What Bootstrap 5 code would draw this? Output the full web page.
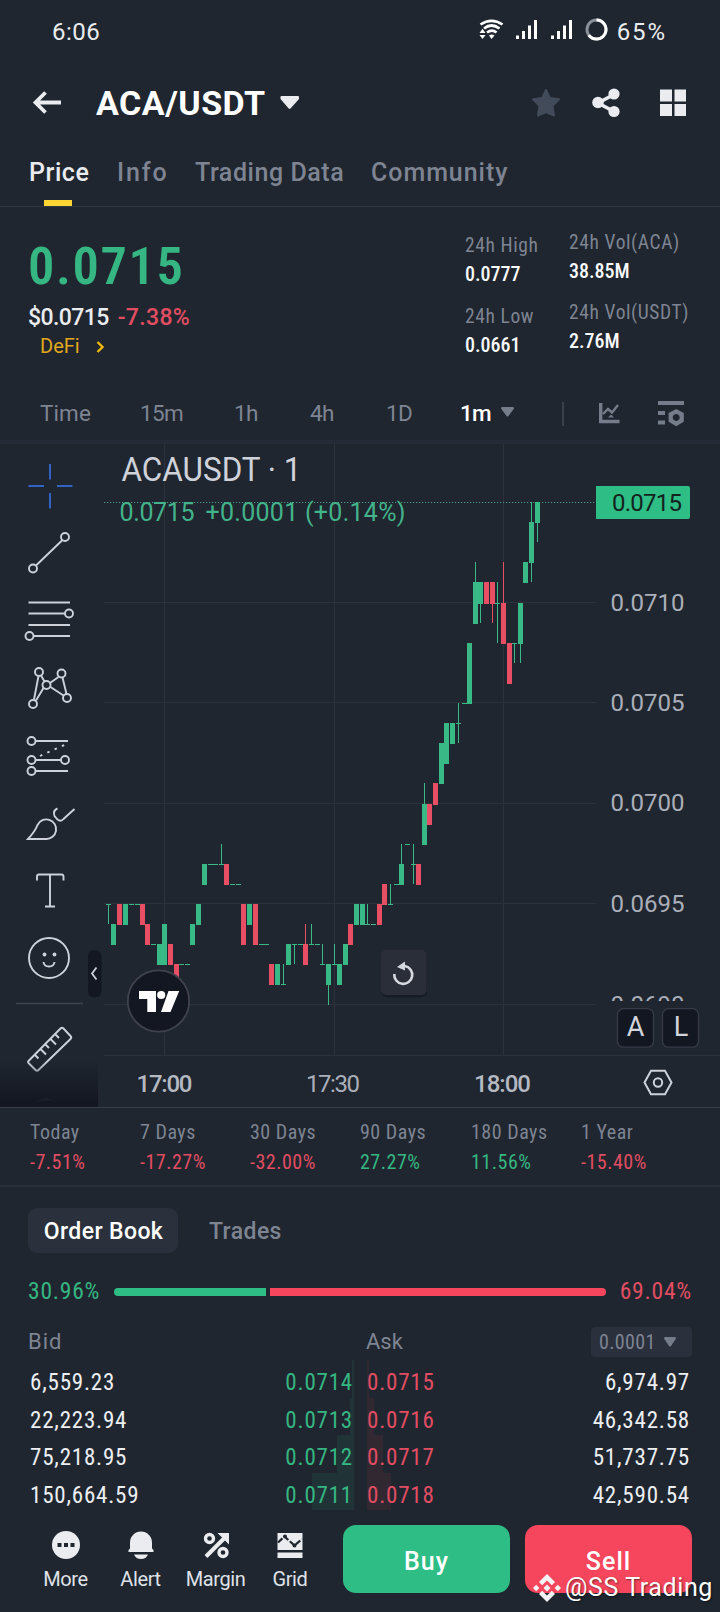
<!DOCTYPE html>
<html lang="en" data-bs-theme="dark">
<head>
<meta charset="utf-8">
<meta name="viewport" content="width=device-width, initial-scale=1">
<title>ACA/USDT</title>
<link href="https://cdn.jsdelivr.net/npm/bootstrap@5.3.0/dist/css/bootstrap.min.css" rel="stylesheet">
<style>
  :root { --bg:#1f262f; --line:#2d343f; --muted:#7e8492; --text:#eaecef; --up:#2ebd85; --down:#f6465d; --gold:#e2a81c; }
  body { width:720px; height:1612px; margin:0; background:var(--bg); color:var(--text); font-family:Roboto,"Noto Sans",sans-serif; overflow:hidden; }
  svg { display:block; flex:none; }
  .up { color:#35b682; } .down { color:#e14d62; } .dim { color:var(--muted); }
  .slim { font-stretch:75%; }
  .status { height:64px; padding:0 53px 0 52px; font-size:24px; letter-spacing:.5px; }
  .topbar { height:78px; padding-left:32px; padding-right:34px; }
  .pair { font-size:34px; font-weight:700; letter-spacing:.5px; line-height:1; color:#fff; margin-left:34px; margin-right:14px; }
  .tabs-row { display:grid; grid-template-columns:88px 78px 176px auto; height:65px; padding-left:29px; border-bottom:1px solid #303741; font-size:25px; font-weight:500; line-height:61px; letter-spacing:.55px; }
  .tabs-row .current { position:relative; color:var(--text); }
  .tabs-row .current::after { content:""; position:absolute; left:15px; top:58px; width:28px; height:6px; background:#fcd535; }
  .tabs-row .wide { letter-spacing:.95px; }
  .tabs-row .info { letter-spacing:1.9px; }
  .summary { height:178px; padding-left:28px; }
  .last-price { font-size:52.5px; font-weight:600; line-height:76px; letter-spacing:1.6px; margin-top:21px; }
  .fiat { font-size:23px; font-weight:500; line-height:27px; letter-spacing:-.6px; }
  .fiat .down { letter-spacing:.35px; margin-left:9px; }
  .tag { font-size:20px; line-height:31px; color:var(--gold); padding-left:12px; }
  .figures { font-size:19.5px; line-height:28px; letter-spacing:.6px; }
  .figures b { display:block; font-weight:500; font-size:20px; letter-spacing:0; }
  .intervals { display:grid; grid-template-columns:100px 94px 76px 76px 74px 102px 37px 59px auto; align-items:center; height:59px; padding:2px 0 0 40px; border-bottom:4px solid #262c37; font-size:22.5px; letter-spacing:-.7px; }
  .chart { height:663px; }
  .tools { width:98px; height:663px; position:relative; overflow:hidden; padding-top:8px; }
  .tools svg { stroke:#cdd1da; fill:none; stroke-width:1.9; }
  .plot { position:relative; overflow:visible; }
  .fade-end { position:absolute; left:0; bottom:0; width:98px; height:46px; background:linear-gradient(#13172200,#131722 90%); }
  .periods { display:grid; grid-template-columns:110px 110px 110px 111px 110px auto; height:80px; padding:10px 0 0 30px; border-top:1px solid #363d48; border-bottom:2px solid #2b313c; font-size:20px; line-height:29.5px; letter-spacing:.5px; }
  .pill { width:150px; height:45px; background:#2a303c; border-radius:9px; color:#fff; padding:4px 0 0 1px; }
  .book-tabs { padding:21px 28px 0; font-size:23px; font-weight:500; letter-spacing:.4px; }
  .depth-split { height:38px; margin-top:20px; padding:0 28px; font-size:23.5px; letter-spacing:.8px; }
  .split-bar { width:492px; height:8px; gap:4px; }
  .split-bar div { height:8px; }
  .book-head { display:grid; grid-template-columns:338px 225px auto; align-items:center; height:30px; margin-top:14px; padding:0 28px; font-size:22px; }
  .step { height:30px; border-radius:4px; background:#2a303c; font-size:20px; letter-spacing:.35px; padding:0 16px 0 8px; }
  .book { margin-top:9px; }
  .book-line { display:grid; grid-template-columns:1fr 1fr; column-gap:14px; padding:0 30px 0 30px; height:37.6px; line-height:38px; font-size:23px; letter-spacing:.8px; color:#eceef2; }
  .book-line > div { position:relative; display:flex; justify-content:space-between; }
  .book-line i { position:absolute; top:-4px; height:37.6px; }
  .book-line .bid i { right:-1px; background:#2ebd8518; }
  .book-line .ask i { left:0; background:#f6465d16; }
  .book-line span { position:relative; }
  .actions { margin-top:11px; height:68px; padding:0 28px 0 29px; }
  .shortcut { font-size:20px; line-height:28px; letter-spacing:-.4px; color:#dfe2e8; padding-top:6px; }
  .shortcut svg { margin-bottom:6px; }
  .trade-btn { width:167px; height:68px; border:0; border-radius:13px; color:#fff; font-size:25px; font-weight:500; letter-spacing:1px; padding:4px 0 0; }
  .watermark { position:absolute; right:7px; bottom:6px; gap:4px; font-size:25px; letter-spacing:.6px; line-height:36px; color:#fff; text-shadow:1px 1px 2px #0008; }
</style>
<script src="https://cdn.jsdelivr.net/npm/bootstrap@5.3.0/dist/js/bootstrap.bundle.min.js"></script>
</head>
<body class="position-relative">

<div class="status d-flex align-items-center justify-content-between">
  <span>6:06</span>
  <div class="d-flex align-items-center">
    <svg width="138" height="30" viewBox="480 17 138 30">
      <g fill="none" stroke="#fff" stroke-width="2.7">
        <path d="M481.500 24.500Q492.500 17.200 503.500 24.500"/><path d="M485 28.500Q492.500 22.500 500.500 28.500"/><path d="M488 32.500Q493 28.800 497.500 32.500"/>
      </g>
      <path d="M490 35.500Q492.500 33.500 495.500 35.500L492.500 39ZM480.500 33L483.500 28.800 486.500 33ZM480.500 35L483.500 39 486.500 35Z" fill="#fff"/>
      <path d="M517 35.500h3v3.500h-3zM523 31h3v8h-3zM529 25.500h3v13.500h-3zM535 20h3v19h-3zM552 35.500h3v3.500h-3zM558 31h3v8h-3zM564 25.500h3v13.500h-3zM570 20h3v19h-3z" fill="#fff"/>
      <circle cx="597.500" cy="29.500" r="9.500" fill="none" stroke="#8a8f97" stroke-width="3"/>
      <path d="M597.500 20A9.500 9.500 0 1 1 589.800 35.100" fill="none" stroke="#fff" stroke-width="3"/>
    </svg>
    <span style="letter-spacing:1.900px">65%</span>
  </div>
</div>

<div class="topbar d-flex align-items-center">
  <svg width="30" height="26" viewBox="0 0 30 26" fill="none" stroke="#eaecef" stroke-width="3.800"><path d="M29 12.500H4M13.500 2.500L3.500 12.500 13.500 22.500"/></svg>
  <span class="pair">ACA/USDT</span>
  <svg width="20" height="14" viewBox="0 0 20 14" fill="#eaecef"><path d="M1.500 0h16.500q1 0 1 1.200v1.800L10.500 12.500q-.9.900-1.800 0L.5 3V1.200Q.5 0 1.500 0z"/></svg>
  <div class="d-flex align-items-center ms-auto" style="gap:32px">
    <svg width="28" height="30" viewBox="0 0 28 30" fill="#424b59" stroke="#424b59" stroke-width="2" stroke-linejoin="round"><path d="M14 2l3.800 8L27 11.200l-6.500 6.600L22 27.500 14 24l-8 3.500 1.500-9.700L1 11.200 10.200 10z"/></svg>
    <svg width="28" height="30" viewBox="0 0 28 30"><path d="M22 6.500L6 15l16 8.500" fill="none" stroke="#eaecef" stroke-width="3.600"/><g fill="#eaecef"><circle cx="22" cy="6" r="5.600"/><circle cx="6" cy="14.500" r="5.800"/><circle cx="22" cy="23.500" r="5.600"/></g></svg>
    <svg width="26" height="28" viewBox="0 0 26 28" fill="#eaecef" class="ms-2"><path d="M0 .5h12v12H0zM14.500 .5h12v12h-12zM0 15h12v12H0zM14.500 15h12v12h-12z"/></svg>
  </div>
</div>

<nav class="tabs-row dim">
  <span class="current">Price</span><span class="info">Info</span><span>Trading Data</span><span class="wide">Community</span>
</nav>

<section class="summary d-flex">
  <div style="width:437px">
    <div class="last-price slim up">0.0715</div>
    <div class="fiat">$0.0715<span class="down">-7.38%</span></div>
    <div class="tag d-flex align-items-center">DeFi
      <svg class="ms-3" width="9" height="12" viewBox="0 0 9 12" fill="none" stroke="#f0b90b" stroke-width="2.400"><path d="M1.500 1l5 5-5 5"/></svg>
    </div>
  </div>
  <div class="figures slim dim" style="width:104px;padding-top:25px">
    <div>24h High<b class="text-light">0.0777</b></div>
    <div style="margin-top:15px">24h Low<b class="text-light">0.0661</b></div>
  </div>
  <div class="figures slim dim" style="padding-top:22px">
    <div>24h Vol(ACA)<b class="text-light">38.85M</b></div>
    <div style="margin-top:14px">24h Vol(USDT)<b class="text-light">2.76M</b></div>
  </div>
</section>

<div class="intervals dim">
  <span style="letter-spacing:.100px">Time</span><span>15m</span><span>1h</span><span>4h</span><span>1D</span>
  <span class="d-flex align-items-center text-white" style="font-weight:500">1m<svg class="ms-2" style="position:relative;left:2px;top:-2px" width="13" height="10" viewBox="0 0 13 10" fill="#767d8a"><path d="M1 0h11q1 0 1 1.500L7.500 9q-1 1-2 0L0 1.500Q0 0 1 0z"/></svg></span>
  <svg width="2" height="24"><path d="M1 0v24" stroke="#39414d" stroke-width="2"/></svg>
  <svg width="21" height="21" viewBox="0 0 21 21" fill="none" stroke="#767d8a"><path d="M1.700 0v18.500H20.500" stroke-width="3.400"/><path d="M4 11l5-5 4 3.500 6-7.500" stroke-width="2.400"/><path d="M9 14.500l3-3 3 3z" fill="#767d8a" stroke="none"/></svg>
  <svg width="27" height="27" viewBox="0 0 27 27" fill="#767d8a"><path d="M0 1h26v4H0zM0 11h7v4H0zM0 20.500h7v4H0z"/><path fill-rule="evenodd" d="M18.200 9l7.600 4v8.800l-7.600 4.400-7.600-4.400V13zM18.200 14a3.500 3.500 0 1 0 .01 0z"/></svg>
</div>

<div class="chart d-flex">
  <div class="tools">
    <svg width="98" height="67.500" viewBox="0 452 98 67.500" style="stroke:#3162c4;stroke-width:2"><path d="M50 464v15.500M50 493v15.500M28.500 486H44M57 486H72.500"/></svg>
    <svg width="98" height="67.500" viewBox="0 519.500 98 67.500"><path d="M36 565L62.500 539.500"/><circle cx="33" cy="568" r="4"/><circle cx="65" cy="536.500" r="4"/></svg>
    <svg width="98" height="67.500" viewBox="0 587 98 67.500"><path d="M28.500 602.500H70M28.500 613.500H65M28.500 625H70M33.500 636H70"/><circle cx="69" cy="613.500" r="4"/><circle cx="29.500" cy="636" r="4"/></svg>
    <svg width="98" height="67.500" viewBox="0 654.500 98 67.500"><path d="M38.500 675.500L34 699M41 675l3.500 6M50 682.500l8.500-6M62.500 677l4 16.500M50.500 686.500l13 8.500M43.500 687.500L36 700"/><circle cx="39" cy="671.500" r="4"/><circle cx="61.500" cy="673" r="4"/><circle cx="46.500" cy="684.500" r="4"/><circle cx="33" cy="703.500" r="4"/><circle cx="67" cy="697.500" r="4"/></svg>
    <svg width="98" height="67.500" viewBox="0 722 98 67.500"><path d="M35.500 741H68M35.500 760H61M35.500 771H68"/><path d="M40 756L65.500 744.500" stroke-dasharray="2.500 5.500"/><circle cx="31.500" cy="741" r="4"/><circle cx="31.500" cy="760" r="4"/><circle cx="65" cy="760" r="4"/><circle cx="31.500" cy="771" r="4"/></svg>
    <svg width="98" height="67.500" viewBox="0 789.500 98 67.500"><path d="M28 838.500Q35 831 37.500 824.500A9.800 9.800 0 1 1 46 838.500ZM57.500 808q-5 2-3 7.500l3 3.500q3.500 2.500 6-.5L74.500 808.500"/></svg>
    <svg width="98" height="67.500" viewBox="0 857 98 67.500"><path d="M37 880.500V876.500Q37 874.500 39 874.500H61.500Q63.500 874.500 63.500 876.500V880.500M50 874.500V906.500M45 906.500H55"/></svg>
    <svg width="98" height="67.500" viewBox="0 924.500 98 67.500"><circle cx="49" cy="957.500" r="20"/><path d="M43.500 961.500q.5 4.500 5.500 4.500t5.500-4.500"/><g fill="#cdd1da" stroke="none"><circle cx="44.500" cy="954" r="1.900"/><circle cx="54.500" cy="954" r="1.900"/></g></svg>
    <svg width="98" height="115" viewBox="0 992 98 115"><path d="M16 1003.500H83" stroke="#3d434f" stroke-width="1.500"/><path d="M28.500 1061L60.500 1028.500q1.500-1.500 3 0L70.500 1036q1.500 1.500 0 3L38.500 1070q-1.500 1.500-3 0L28.500 1063q-1-1 0-2zM35 1055l3.500 3.500M40.500 1049l5.500 5.500M45.500 1044.500l3.500 3.500M50.500 1039l5.500 5.500M55.500 1034.500l3.500 3.500"/><path d="M33 1107q5-7.500 13.500-7.500t13.500 7.500" stroke="#8a8f9a"/></svg>
    <div class="fade-end"></div>
  </div>
  <svg class="plot" width="622" height="663" viewBox="98 444 622 663" font-family="Roboto, sans-serif">
    <path d="M164.500 444V1055.500M334.500 444V1055.500M503.500 444V1055.500M104 602.500H596M104 702.500H596M104 803.500H596M104 903.500H596M104 1004.500H596M104 1055.500H720" stroke="#2b323c" fill="none"/>
    <path d="M104 502.500H596" stroke="#4a9c84" stroke-dasharray="1.200 1.800"/>
    <g id="candles" shape-rendering="crispEdges"></g>
    <text x="121.500" y="481.300" font-size="32.500" fill="#cfd2da" textLength="180" lengthAdjust="spacingAndGlyphs">ACAUSDT · 1</text>
    <g fill="#42b38b" font-size="25"><text x="119.500" y="520.500" textLength="75">0.0715</text><text x="205.500" y="520.500" textLength="200">+0.0001 (+0.14%)</text></g>
    <g fill="#abafb9" font-size="24">
      <text x="610.500" y="610.500" textLength="74">0.0710</text><text x="610.500" y="711" textLength="74">0.0705</text><text x="610.500" y="811.300" textLength="74">0.0700</text><text x="610.500" y="912" textLength="74">0.0695</text>
      <svg x="600" y="990" width="120" height="11"><text x="10.500" y="22.500" textLength="74">0.0690</text></svg>
      <text x="306" y="1092" textLength="54">17:30</text>
      <g font-weight="500" fill="#b5b9c2"><text x="136.500" y="1092" textLength="56">17:00</text><text x="474" y="1092" textLength="57">18:00</text></g>
    </g>
    <path d="M596 486h92q2 0 2 2v29q0 2-2 2h-92z" fill="#2ebd85"/>
    <text x="612" y="511" font-size="24" fill="#12231d" textLength="70">0.0715</text>
    <g fill="#131722" stroke="#363b47" stroke-width="1.300"><rect x="617.500" y="1008.700" width="36" height="38.500" rx="6"/><rect x="662.500" y="1008.700" width="36" height="38.500" rx="6"/></g>
    <g fill="#d1d4dc" font-size="27" text-anchor="middle"><text x="635.500" y="1036">A</text><text x="681" y="1036">L</text></g>
    <g fill="none" stroke="#cdd1da" stroke-width="2"><path d="M651 1070.800h14l6.500 11.700-6.500 11.700h-14l-6.500-11.700z"/><circle cx="658" cy="1082.500" r="4.200"/></g>
    <circle cx="158.500" cy="1001" r="30.700" fill="#131722" stroke="#40434e" stroke-width="1.800"/>
    <path d="M139 991h17v21h-8.700v-13H139zM168.500 991h10.700l-8.700 21H161z" fill="#fff"/><circle cx="161.200" cy="995" r="4.100" fill="#fff"/>
    <rect x="88" y="950" width="13.500" height="47.500" rx="6" fill="#131722"/><path d="M96.500 967.500l-4.500 6 4.500 6" fill="none" stroke="#cdd1da" stroke-width="1.800"/>
    <rect x="381" y="952" width="46" height="45.500" rx="6" fill="#171c24"/><rect x="381" y="950" width="45.500" height="45" rx="5" fill="#2a2e39"/>
    <path d="M405 966A9 9 0 1 1 394.300 974" fill="none" stroke="#d6d9e0" stroke-width="2.600"/><path d="M397 967l8-5.500v9z" fill="#d6d9e0"/>
  </svg>
</div>

<div class="periods slim">
  <div><div class="dim">Today</div><div class="down">-7.51%</div></div>
  <div><div class="dim">7 Days</div><div class="down">-17.27%</div></div>
  <div><div class="dim">30 Days</div><div class="down">-32.00%</div></div>
  <div><div class="dim">90 Days</div><div class="up">27.27%</div></div>
  <div><div class="dim">180 Days</div><div class="up">11.56%</div></div>
  <div><div class="dim">1 Year</div><div class="down">-15.40%</div></div>
</div>

<div class="book-tabs d-flex align-items-center dim">
  <div class="pill d-flex align-items-center justify-content-center">Order Book</div>
  <div style="margin-left:31px;padding-top:4px">Trades</div>
</div>

<div class="depth-split slim d-flex align-items-center justify-content-between">
  <span class="up">30.96%</span>
  <div class="split-bar d-flex">
    <div class="rounded-start-pill" style="width:30.960%;background:var(--up)"></div>
    <div class="rounded-end-pill flex-fill" style="background:var(--down)"></div>
  </div>
  <span class="down">69.04%</span>
</div>

<div class="book-head dim">
  <span style="letter-spacing:1px">Bid</span><span>Ask</span>
  <div class="step slim d-flex align-items-center justify-content-between">0.0001
    <svg width="12" height="10" viewBox="0 0 12 10" fill="#767d8a"><path d="M1 0h10q1 0 1 1.500L7 9q-1 1-2 0L0 1.500Q0 0 1 0z"/></svg>
  </div>
</div>

<div class="book slim" id="book"></div>

<div class="actions d-flex">
  <div class="d-flex" style="width:314px">
    <div class="shortcut d-flex flex-column align-items-center" style="width:73px">
      <svg width="28" height="28" viewBox="0 0 28 28"><circle cx="14" cy="14" r="14" fill="#eaecef"/><path d="M5.500 12h4v4h-4zM12 12h4v4h-4zM18.500 12h4v4h-4z" fill="#1f262f"/></svg>More</div>
    <div class="shortcut d-flex flex-column align-items-center" style="width:77px">
      <svg width="28" height="28" viewBox="0 0 28 28" fill="#eaecef"><path d="M14 .5a11 11 0 0 1 11 11v6l1.500 1.500v2H1.500v-2L3 17.500v-6A11 11 0 0 1 14 .5zM7 23.500h14q-2 4.500-7 4.500t-7-4.500z"/></svg>Alert</div>
    <div class="shortcut d-flex flex-column align-items-center" style="width:73px">
      <svg width="28" height="28" viewBox="0 0 28 28" fill="none" stroke="#eaecef"><g stroke-width="3.400"><circle cx="7.500" cy="7.500" r="4"/><circle cx="21" cy="21.500" r="4"/><path d="M4 25.500L22 7.500" stroke-width="4"/></g><path d="M15.500 2H27v11.500z" fill="#eaecef" stroke="none"/></svg>Margin</div>
    <div class="shortcut d-flex flex-column align-items-center" style="width:76px">
      <svg width="26" height="28" viewBox="0 0 26 28"><path d="M.5 2h25v17H.5zM.5 21.500h25V27H.5z" fill="#eaecef"/><path d="M1 11.500l6.500-6L17.500 14.500 25 8" fill="none" stroke="#1f262f" stroke-width="2.200" stroke-dasharray="6 2"/><g fill="#1f262f"><circle cx="8" cy="5.500" r="2"/><circle cx="17.500" cy="14.500" r="2"/></g></svg>Grid</div>
  </div>
  <button class="trade-btn" style="background:var(--up)">Buy</button>
  <button class="trade-btn ms-auto" style="background:var(--down)">Sell</button>
</div>

<div class="watermark d-flex align-items-center">
  <svg width="28" height="28" viewBox="0 0 28 28" fill="#f3f3f5"><path d="M14 0l8 8-3.200 3.200L14 6.400l-4.800 4.800L6 8zM14 28l8-8-3.200-3.200L14 21.600l-4.800-4.800L6 20zM3.200 10.800L6.400 14l-3.200 3.200L0 14zM24.800 10.800L28 14l-3.200 3.200-3.200-3.200zM14 10.500l3.500 3.500-3.500 3.500-3.500-3.500z"/></svg>
  @SS Trading
</div>

<script>
// Candles: [x, body top, body bottom, wick top, wick bottom, rising], levels counted in ticks of 0.0001 below 0.0715
const candles = [
  [108,20,20,20,21,1],[113,21,22,21,22,1],[119,20,21,20,21,0],[125,20,21,20,21,1],[131,20,20,20,20,1],[137,20,20,20,20,1],
  [142,20,21,20,21,0],[147,21,22,21,22,0],[153,22,22,22,22,1],[159,22,23,22,23,1],[164,21,23,21,23,1],[170,22,23,22,23,0],
  [176,23,24,23,24,0],[181,23,23,23,23,1],[187,23,23,23,23,1],[192,21,22,21,22,1],[198,20,21,20,21,1],[204,18,19,18,19,1],
  [210,18,18,18,18,1],[215,18,18,18,18,1],[221,18,18,17,18,1],[226,18,19,18,19,0],[232,19,19,19,19,1],[238,19,19,19,19,1],
  [243,20,22,20,22,0],[249,20,21,20,21,1],[255,20,22,20,22,0],[261,22,22,22,22,1],[266,22,22,22,22,1],[271,23,24,23,24,0],
  [277,23,24,23,24,1],[283,24,24,23,24,1],[288,22,23,22,23,1],[294,22,22,22,23,1],[300,22,22,22,22,1],[305,22,23,21,23,0],
  [311,22,22,21,22,1],[317,22,22,22,22,1],[322,23,23,22,23,1],[328,23,24,23,25,1],[334,23,23,22,23,1],[339,23,24,23,24,1],
  [345,22,23,22,23,1],[350,21,22,21,22,0],[356,20,21,20,21,1],[362,20,21,20,21,1],[367,21,21,20,21,1],[373,21,21,21,21,1],
  [379,20,21,20,21,0],[384,19,20,19,20,0],[390,20,20,19,20,1],[396,19,19,19,19,1],[401,18,19,17,19,1],[407,17,17,17,17,1],
  [413,18,18,17,19,1],[418,18,19,18,19,0],[424,15,17,14,17,1],[429,15,16,15,16,0],[435,14,15,14,15,0],[441,12,14,12,14,1],
  [446,11,13,11,13,1],[452,11,12,11,12,1],[458,11,11,10,12,1],[464,10,10,10,10,1],[469,7,10,7,10,1],[475,4,6,3,6,1],
  [480,4,5,4,6,1],[486,4,5,4,5,0],[492,4,5,4,6,0],[497,5,5,4,7,1],[503,5,7,3,7,0],[509,7,9,7,9,0],
  [514,7,7,7,8,1],[520,5,7,5,8,1],[525,3,4,3,4,1],[531,1,3,0,4,1],[537,0,1,0,2,1]
];
const y = level => Math.round(502 + level * 20.1);
document.getElementById('candles').innerHTML = candles.map(([x, top, bottom, high, low, rising]) =>
  `<g fill="${rising ? '#38b985' : '#e84f64'}"><rect x="${x - 2}" y="${y(top)}" width="5" height="${y(bottom) - y(top) + 1}"/>` +
  `<rect x="${x}" y="${y(high)}" width="1" height="${y(low) - y(high)}"/></g>`).join('');

// Order book: bid amount, bid price, bid depth px, ask price, ask amount, ask depth px
const book = [
  ['6,559.23','0.0714',2,'0.0715','6,974.97',2],
  ['22,223.94','0.0713',4,'0.0716','46,342.58',7],
  ['75,218.95','0.0712',17,'0.0717','51,737.75',16],
  ['150,664.59','0.0711',42,'0.0718','42,590.54',24]
];
document.getElementById('book').innerHTML = book.map(([bidQty, bid, bidDepth, ask, askQty, askDepth]) =>
  `<div class="book-line"><div class="bid"><i style="width:${bidDepth}px"></i><span>${bidQty}</span><span class="up">${bid}</span></div>` +
  `<div class="ask"><i style="width:${askDepth}px"></i><span class="down">${ask}</span><span>${askQty}</span></div></div>`).join('');
</script>
</body>
</html>
